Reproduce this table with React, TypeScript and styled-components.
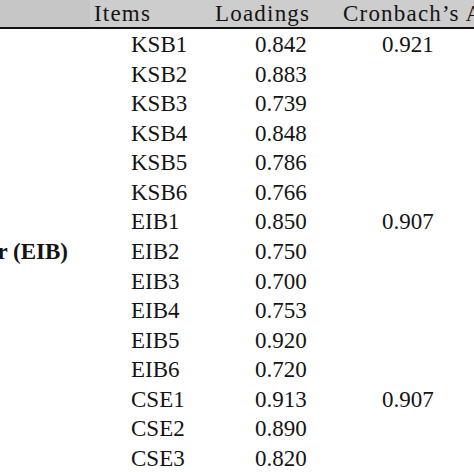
import React from "react";
import styled, { createGlobalStyle } from "styled-components";

interface Row {
  item: string;
  loading: string;
  alpha?: string;
  label?: string;
}

const rows: Row[] = [
  { item: "KSB1", loading: "0.842", alpha: "0.921" },
  { item: "KSB2", loading: "0.883" },
  { item: "KSB3", loading: "0.739" },
  { item: "KSB4", loading: "0.848" },
  { item: "KSB5", loading: "0.786" },
  { item: "KSB6", loading: "0.766" },
  { item: "EIB1", loading: "0.850", alpha: "0.907" },
  { item: "EIB2", loading: "0.750", label: "Employee Innovative Behavior (EIB)" },
  { item: "EIB3", loading: "0.700" },
  { item: "EIB4", loading: "0.753" },
  { item: "EIB5", loading: "0.920" },
  { item: "EIB6", loading: "0.720" },
  { item: "CSE1", loading: "0.913", alpha: "0.907" },
  { item: "CSE2", loading: "0.890" },
  { item: "CSE3", loading: "0.820" },
];

const GlobalStyle = createGlobalStyle`
  html, body {
    margin: 0;
    padding: 0;
    background: #ffffff;
    overflow: hidden;
  }
`;

const Table = styled.div`
  width: 474px;
  height: 474px;
  overflow: hidden;
  font-family: "Liberation Serif", "Times New Roman", serif;
  font-size: 23px;
  color: #141414;
`;

const columns = "90px 125px 125px 1fr";

const HeaderRow = styled.div`
  display: grid;
  grid-template-columns: ${columns};
  height: 27px;
  background: #cdcdcd;
  border-bottom: 2px solid #111;
`;

const HeadCell = styled.div<{ $indent: number; $dark?: boolean }>`
  padding-left: ${(p) => p.$indent}px;
  line-height: 27px;
  letter-spacing: 1.2px;
  white-space: nowrap;
  background: ${(p) => (p.$dark ? "#c6c6c6" : "transparent")};
`;

const Body = styled.div`
  padding-top: 1px;
`;

const BodyRow = styled.div`
  display: grid;
  grid-template-columns: ${columns};
  height: 29.57px;
  line-height: 29.57px;
`;

const Cell = styled.div<{ $indent: number }>`
  padding-left: ${(p) => p.$indent}px;
  white-space: nowrap;
`;

const LabelCell = styled.div`
  display: flex;
  justify-content: flex-end;
  padding-right: 22px;
  font-weight: bold;
  white-space: nowrap;
  min-width: 0;
`;

const App: React.FC = () => {
  return (
    <>
      <GlobalStyle />
      <Table>
        <HeaderRow>
          <HeadCell $indent={0} $dark />
          <HeadCell $indent={4}>Items</HeadCell>
          <HeadCell $indent={0}>Loadings</HeadCell>
          <HeadCell $indent={3}>Cronbach’s Alpha</HeadCell>
        </HeaderRow>
        <Body>
          {rows.map((row) => (
            <BodyRow key={row.item}>
              <LabelCell>{row.label && <span>{row.label}</span>}</LabelCell>
              <Cell $indent={41}>{row.item}</Cell>
              <Cell $indent={40}>{row.loading}</Cell>
              <Cell $indent={42}>{row.alpha}</Cell>
            </BodyRow>
          ))}
        </Body>
      </Table>
    </>
  );
};

export default App;
